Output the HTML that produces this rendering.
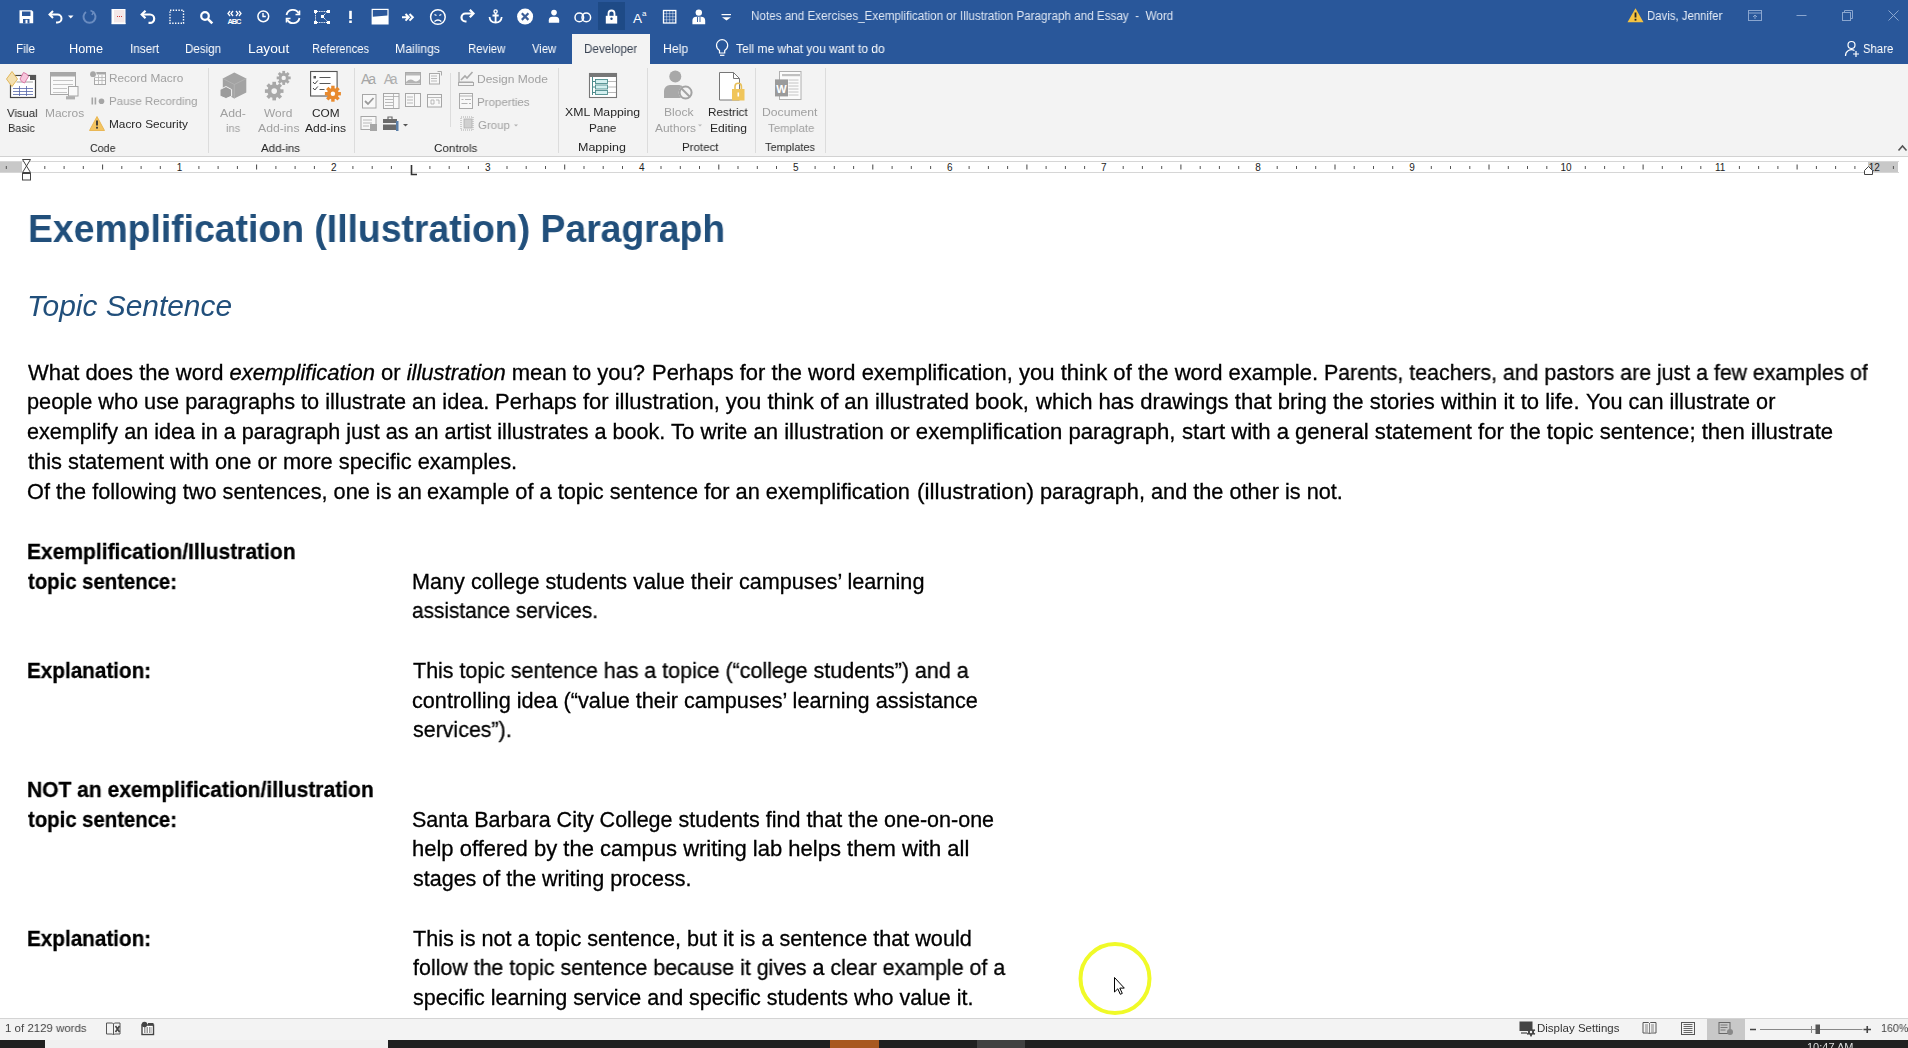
<!DOCTYPE html>
<html><head><meta charset="utf-8">
<style>
html,body{margin:0;padding:0}
body{width:1908px;height:1048px;overflow:hidden;position:relative;background:#fff;font-family:"Liberation Sans",sans-serif}
.a{position:absolute}
.t{position:absolute;white-space:nowrap;transform-origin:0 0;will-change:transform;font-family:"Liberation Sans",sans-serif}
svg{position:absolute;overflow:visible}
</style></head><body>
<!-- title + tabs -->
<div class="a" style="left:0;top:0;width:1908px;height:64px;background:#29579a"></div>
<div class="a" style="left:598px;top:2px;width:27px;height:28px;background:#1e4a86"></div>
<div class="a" style="left:572px;top:34px;width:78px;height:30px;background:#f3f3f3"></div>
<!-- ribbon -->
<div class="a" style="left:0;top:64px;width:1908px;height:92px;background:#f3f3f3"></div>
<div class="a" style="left:0;top:156px;width:1908px;height:1px;background:#d2d2d2"></div>
<!-- ribbon separators -->
<div class="a" style="left:208px;top:68px;width:1px;height:85px;background:#dcdcdc"></div>
<div class="a" style="left:354px;top:68px;width:1px;height:85px;background:#dcdcdc"></div>
<div class="a" style="left:450px;top:73px;width:1px;height:54px;background:#dcdcdc"></div>
<div class="a" style="left:558px;top:68px;width:1px;height:85px;background:#dcdcdc"></div>
<div class="a" style="left:647px;top:68px;width:1px;height:85px;background:#dcdcdc"></div>
<div class="a" style="left:755px;top:68px;width:1px;height:85px;background:#dcdcdc"></div>
<div class="a" style="left:825px;top:68px;width:1px;height:85px;background:#dcdcdc"></div>
<svg width="1908" height="1048" style="left:0;top:0">
<g fill="none" stroke="#fff" stroke-width="1.6">
 <!-- save -->
 <path d="M19.5 10.2h12.2l1.5 1.5v11.6h-13.7z" fill="#fff" stroke="none"/>
 <rect x="22" y="11.5" width="8.5" height="4.5" fill="#2b579a" stroke="none"/>
 <rect x="23" y="19" width="6.5" height="4.3" fill="#2b579a" stroke="none"/>
 <rect x="25.5" y="19.8" width="2" height="3.5" fill="#fff" stroke="none"/>
 <!-- undo -->
 <path d="M50 14.5h7.5a4 4 0 0 1 0 8h-1.5" stroke-width="2"/>
 <path d="M53 11l-3.5 3.5 3.5 3.5" stroke-width="2"/>
 <path d="M68 15.5h5.5l-2.75 3z" fill="#fff" stroke="none"/>
 <!-- redo disabled -->
 <path d="M93 12a6 6 0 1 1 -7 0" stroke="#6a8cc0" stroke-width="2"/>
 <path d="M90.5 10.5l3 1.5-1.5 3" stroke="#6a8cc0" stroke-width="1.6"/>
 <!-- book -->
 <path d="M111.5 9h14v15h-13a1.5 1.5 0 0 1-1-1.5z" fill="#fff" stroke="none"/>
 <rect x="114" y="10" width="10.5" height="12.5" fill="#f4e8e8" stroke="none"/>
 <path d="M117 16.5h5" stroke="#d04040" stroke-width="1" stroke-dasharray="1 1"/>
 <path d="M111.5 23.5h14" stroke="#fff" stroke-width="1.4"/>
 <!-- undo2 -->
 <path d="M142 14.5h8a4.2 4.2 0 0 1 0 8.4h-1.5" stroke-width="2.2"/>
 <path d="M145.5 10.8l-3.8 3.7 3.8 3.7" stroke-width="2.2"/>
 <!-- dotted rect -->
 <rect x="170" y="10.2" width="13.5" height="13" stroke-width="1.4" stroke-dasharray="1.4 1.4"/>
 <!-- search -->
 <circle cx="205" cy="16" r="3.8" stroke-width="2.2"/>
 <path d="M207.8 18.8l4.5 4.5" stroke-width="2.6"/>
 <!-- ABC -->
 <path d="M230 11l-2 2.5 2 2.5M233 11l-2 2.5 2 2.5M236 11l2 2.5-2 2.5M239 11l2 2.5-2 2.5" stroke-width="1.3"/>
 <text x="227.5" y="23.6" font-family="Liberation Sans" font-weight="bold" font-size="7.5" fill="#fff" stroke="none" textLength="14">ABC</text>
 <!-- clock -->
 <circle cx="263.3" cy="16.3" r="5.4" stroke-width="1.5"/>
 <path d="M263 13v3.5h2.8" stroke-width="1.4"/>
 <!-- sync -->
 <path d="M286.5 15a6.5 6.5 0 0 1 12.2-1.5M299.5 18a6.5 6.5 0 0 1-12.2 1.5" stroke-width="1.8"/>
 <path d="M299.5 10.5v4h-4M286.5 22.5v-4h4" stroke-width="1.6"/>
 <!-- shape select -->
 <g fill="#fff" stroke="none"><rect x="314" y="10" width="3" height="3"/><rect x="327" y="10" width="3" height="3"/><rect x="314" y="21" width="3" height="3"/><rect x="327" y="21" width="3" height="3"/><rect x="321" y="15" width="3" height="3"/></g>
 <path d="M317 11.5h10M317 22.5h10M315.5 13v8M322.5 16.5l5-5M322.5 16.5l5 5" stroke-width="1" stroke-dasharray="1.2 1"/>
 <!-- ! -->
 <rect x="349.2" y="10.8" width="2.6" height="8.2" fill="#fff" stroke="none"/>
 <rect x="349.2" y="20.5" width="2.6" height="2.5" fill="#fff" stroke="none"/>
 <!-- window -->
 <rect x="371.6" y="8.8" width="17" height="15.7" fill="#fff" stroke="none"/>
 <path d="M372.8 10h14.6v5.5l-14.6 1.3z" fill="#2b579a" stroke="none"/>
 <!-- arrows -->
 <path d="M402 17.3h6M405.5 14l3.3 3.3-3.3 3.3M409.5 14l3.3 3.3-3.3 3.3" stroke-width="2"/>
 <!-- sad face -->
 <circle cx="437.9" cy="17" r="7.3" stroke-width="1.5"/>
 <path d="M434.5 21.5q3.4-3 6.8 0M434.5 14.5l2 1M441.3 14.5l-2 1" stroke-width="1.3"/>
 <!-- redo -->
 <path d="M473 15.5h-7.5a4 4 0 0 0 0 8h1" stroke-width="2.2" transform="translate(0,-2)"/>
 <path d="M469.8 9.8l3.7 3.7-3.7 3.7" stroke-width="2.2"/>
 <!-- anchor -->
 <circle cx="495.6" cy="11.5" r="1.6" stroke-width="1.4"/>
 <path d="M495.6 13v9.5M492.5 15.5h6.2M489.5 17q0.5 5.5 6.1 5.5q5.6 0 6.1-5.5" stroke-width="1.8"/>
 <!-- x circle -->
 <circle cx="525.1" cy="16.6" r="8" fill="#fff" stroke="none"/>
 <path d="M521.8 13.3l6.6 6.6M528.4 13.3l-6.6 6.6" stroke="#3b5d96" stroke-width="2.2"/>
 <!-- person -->
 <circle cx="554" cy="12.6" r="2.8" fill="#fff" stroke="none"/>
 <path d="M548.8 22.8v-2.5a3.5 3.5 0 0 1 3.5-3.5h3.4a3.5 3.5 0 0 1 3.5 3.5v2.5z" fill="#fff" stroke="none"/>
 <!-- rings -->
 <circle cx="579.3" cy="17.4" r="4.3" stroke-width="1.5"/>
 <circle cx="586.3" cy="17.4" r="4.3" stroke-width="1.5"/>
 <!-- lock -->
 <path d="M608.5 16v-2.5a3 3 0 0 1 6 0v2.5" stroke-width="1.8"/>
 <rect x="605.8" y="15.8" width="11.4" height="7.8" fill="#fff" stroke="none"/>
 <circle cx="611.5" cy="18.8" r="1.2" fill="#1e4a86" stroke="none"/>
 <!-- Aa -->
 <text x="633" y="22.8" font-family="Liberation Sans" font-size="13.5" fill="#fff" stroke="none">A</text>
 <text x="642" y="15.5" font-family="Liberation Sans" font-size="8" fill="#fff" stroke="none">a</text>
 <!-- grid -->
 <rect x="663.5" y="10.5" width="12.3" height="12.5" stroke-width="1.3"/>
 <path d="M666.6 10.5v12.5M669.7 10.5v12.5M672.8 10.5v12.5M663.5 13.6h12.3M663.5 16.7h12.3M663.5 19.8h12.3" stroke-width="0.9" stroke-dasharray="1 1"/>
 <!-- person2 -->
 <circle cx="698.8" cy="12.6" r="3.2" fill="#fff" stroke="none"/>
 <path d="M692.4 24.3v-3.5a4 4 0 0 1 4-4h4.8a4 4 0 0 1 4 4v3.5z" fill="#fff" stroke="none"/>
 <path d="M697.5 17v5M700 17v5" stroke="#2b579a" stroke-width="0.9"/>
 <!-- dropdown -->
 <path d="M721.5 14.6h9.5" stroke-width="1.2"/>
 <path d="M722 17.2h9l-4.5 3.4z" fill="#fff" stroke="none"/>
 <!-- bulb -->
 <path d="M719.5 53v-2.5q-3-2-3-5.2a5.6 5.6 0 0 1 11.2 0q0 3.2-3 5.2v2.5z" stroke-width="1.2"/>
 <path d="M720 55.3h4.4" stroke-width="1.2"/>
 <!-- warning triangle title -->
 <path d="M1635.5 8.2l8 14h-16z" fill="#f5c342" stroke="none"/>
 <path d="M1635.5 12.5v5" stroke="#222" stroke-width="1.8"/>
 <rect x="1634.6" y="18.8" width="1.8" height="1.8" fill="#222" stroke="none"/>
 <!-- window controls -->
 <g stroke="#8aa6cf" stroke-width="1">
 <rect x="1748.5" y="10.5" width="13" height="10"/>
 <path d="M1748.5 13h13M1755 15v4M1753 17l2-2 2 2"/>
 <path d="M1796.5 15.5h10"/>
 <rect x="1842.5" y="12.5" width="8" height="8"/>
 <path d="M1844.5 12.5v-2h8v8h-2"/>
 <path d="M1888.5 10.5l10 10M1898.5 10.5l-10 10"/>
 </g>
 <!-- share icon -->
 <circle cx="1851.5" cy="45" r="3.5" stroke-width="1.2"/>
 <path d="M1845.5 56a6 6 0 0 1 9-5.5M1856 51v6M1853 54h6" stroke-width="1.2"/>
</g>
</svg>
<svg width="1908" height="1048" style="left:0;top:0">
<!-- Visual Basic -->
<rect x="10.5" y="75.5" width="25" height="22" fill="#fff" stroke="#444" stroke-width="1.2"/>
<rect x="30" y="75" width="6" height="5" fill="#555"/>
<path d="M13 88.5h20M13 91.5h20M13 94.5h20M19.5 86v10M26.5 86v10" stroke="#5566aa" stroke-width="0.8" fill="none"/>
<path d="M16.5 82h16.5" stroke="#888" stroke-width="0.8"/>
<path d="M12 71.5l5.5 7.5-5.5 7.5-5.5-7.5z" fill="#f3dfb0" stroke="#e2b75a" stroke-width="1"/>
<path d="M23.5 72.5q4 1 5 4l-4 6.5q-3.5-1-4.5-4z" fill="#f6c6dc" stroke="#d87aa6" stroke-width="1"/>
<!-- Macros disabled -->
<rect x="50.5" y="72.5" width="25" height="22" fill="#fafafa" stroke="#a6a6a6" stroke-width="1"/>
<rect x="50.5" y="72.5" width="25" height="4" fill="#a8a8a8"/>
<path d="M53 80.5h20M53 84.5h20M53 88.5h14M53 92.5h14" stroke="#b8b8b8" stroke-width="0.8"/>
<rect x="68.5" y="86.5" width="9.5" height="9.5" fill="#fafafa" stroke="#a6a6a6" stroke-width="1"/>
<rect x="66" y="96.2" width="9" height="3.2" fill="#b0b0b0"/>
<!-- record macro -->
<rect x="94.5" y="72.5" width="11" height="12" fill="#fafafa" stroke="#a8a8a8" stroke-width="1"/>
<rect x="94.5" y="72" width="11" height="2.5" fill="#a8a8a8"/>
<path d="M95 77.5h10M95 80.5h10M98.5 75v9M102 75v9" stroke="#b4b4b4" stroke-width="0.8"/>
<circle cx="93" cy="74.2" r="3.6" fill="#f3f3f3"/>
<circle cx="93" cy="74.2" r="2.9" fill="#a6a6a6"/>
<!-- pause -->
<rect x="91.5" y="97.5" width="1.6" height="7" fill="#a6a6a6"/><rect x="94.6" y="97.5" width="1.6" height="7" fill="#a6a6a6"/>
<circle cx="101.5" cy="101.3" r="2.8" fill="#a6a6a6"/>
<!-- macro security -->
<path d="M97 116.5l7.5 14h-15z" fill="#f3c462" stroke="#e6ad40" stroke-width="0.8"/>
<rect x="96.1" y="120.5" width="1.8" height="5" fill="#333"/><rect x="96.1" y="126.8" width="1.8" height="1.8" fill="#333"/>
<!-- Add-ins -->
<path d="M222.8 78.5l11.5-6 12 6v14l-12 6-11.5-6z" fill="#a3a3a3"/>
<path d="M222.8 78.5l11.5 6 12-6M234.3 84.5v14" stroke="#b8b8b8" stroke-width="0.7" fill="none"/>
<path d="M220 89.5l6-3 5.6 3v6.6l-5.6 2.5-6-2.5z" fill="#9b9b9b" stroke="#f3f3f3" stroke-width="1"/>
<!-- Word Add-ins gears -->
<g fill="#a8a8a8">
<circle cx="274.2" cy="91.1" r="6.8"/>
<g transform="translate(274.2,91.1)"><rect x="-1.8" y="-9.3" width="3.6" height="18.6"/><rect x="-1.8" y="-9.3" width="3.6" height="18.6" transform="rotate(45)"/><rect x="-1.8" y="-9.3" width="3.6" height="18.6" transform="rotate(90)"/><rect x="-1.8" y="-9.3" width="3.6" height="18.6" transform="rotate(135)"/></g>
<circle cx="283.7" cy="77.9" r="5"/>
<g transform="translate(283.7,77.9)"><rect x="-1.4" y="-7" width="2.8" height="14"/><rect x="-1.4" y="-7" width="2.8" height="14" transform="rotate(45)"/><rect x="-1.4" y="-7" width="2.8" height="14" transform="rotate(90)"/><rect x="-1.4" y="-7" width="2.8" height="14" transform="rotate(135)"/></g>
</g>
<circle cx="274.2" cy="91.1" r="2.8" fill="#f3f3f3"/><circle cx="283.7" cy="77.9" r="2.2" fill="#f3f3f3"/>
<!-- COM add-ins -->
<rect x="310.6" y="71.5" width="26.5" height="24.5" fill="#fff" stroke="#555" stroke-width="1.1"/>
<rect x="313.5" y="76" width="2.5" height="2.5" fill="#555"/>
<path d="M319.5 77.5h11M319.5 83.5h11M319.5 89.5h5" stroke="#444" stroke-width="0.9"/>
<path d="M313 82l1.8 2 3-3.5M313 88l1.8 2 3-3.5" stroke="#444" stroke-width="1" fill="none"/>
<g fill="#e88a2e"><circle cx="332.9" cy="93.7" r="5.8"/>
<g transform="translate(332.9,93.7)"><rect x="-1.7" y="-8" width="3.4" height="16"/><rect x="-1.7" y="-8" width="3.4" height="16" transform="rotate(45)"/><rect x="-1.7" y="-8" width="3.4" height="16" transform="rotate(90)"/><rect x="-1.7" y="-8" width="3.4" height="16" transform="rotate(135)"/></g></g>
<circle cx="332.9" cy="93.7" r="2.2" fill="#fff"/>
<!-- controls grid -->
<text x="361" y="84.3" font-family="Liberation Sans" font-size="14" fill="#a6a6a6" textLength="15">Aa</text>
<text x="383.8" y="84.3" font-family="Liberation Sans" font-size="14" fill="#b0b0b0" textLength="13.7">Aa</text>
<rect x="405.5" y="72.5" width="15" height="12" fill="#f8f8f8" stroke="#aaa" stroke-width="1"/>
<path d="M406 82q4-4 7.5-1.5t6.5-1.5v4.5h-14z" fill="#b4b4b4"/><rect x="406" y="73" width="14" height="2.5" fill="#b8b8b8"/>
<rect x="429.5" y="73.5" width="10" height="10.5" fill="#f8f8f8" stroke="#aaa" stroke-width="1"/>
<path d="M431 76h6M431 78.5h6M431 81h6" stroke="#aaa" stroke-width="0.8"/><path d="M437.5 71.5h4v4" stroke="#aaa" fill="none"/>
<rect x="362.5" y="94.5" width="13.5" height="13.5" fill="#f8f8f8" stroke="#a6a6a6" stroke-width="1"/>
<path d="M365 101l3 3 5.5-6" stroke="#9a9a9a" stroke-width="1.8" fill="none"/>
<rect x="383.5" y="93.5" width="15.5" height="15" fill="#f8f8f8" stroke="#a6a6a6" stroke-width="1"/>
<path d="M383.5 96.5h15.5M385 99.5h8M385 102.5h8M385 105.5h8M393.5 93.5v15" stroke="#aaa" stroke-width="0.8"/>
<rect x="405.5" y="93.5" width="15" height="13" fill="#f8f8f8" stroke="#a6a6a6" stroke-width="1"/>
<path d="M414.5 93.5v13M407 97h6M407 100h6M407 103h6" stroke="#aaa" stroke-width="0.8"/>
<rect x="427.5" y="94.5" width="14" height="12.5" fill="#f8f8f8" stroke="#a6a6a6" stroke-width="1"/>
<path d="M427.5 97.5h14M431 100h3v4h-3zM436 100h3v4" stroke="#aaa" stroke-width="0.8" fill="none"/>
<rect x="361" y="116.5" width="15" height="13" fill="#f8f8f8" stroke="#a6a6a6" stroke-width="1"/>
<path d="M363 120h9M363 123h9M363 126h6" stroke="#aaa" stroke-width="0.8"/><rect x="370" y="124" width="7" height="7" fill="#a6a6a6"/>
<rect x="383" y="119" width="14" height="11" fill="#6b6b6b"/><path d="M388 119v-2h4v2" stroke="#6b6b6b" fill="none" stroke-width="1.2"/>
<rect x="383" y="123" width="14" height="1.5" fill="#f3f3f3"/><rect x="396" y="121" width="2.5" height="10" fill="#5b7fa8"/>
<path d="M403 124h5l-2.5 2.5z" fill="#555"/>
<!-- design mode -->
<path d="M459 72v10h14" stroke="#aaa" stroke-width="1.2" fill="none"/>
<path d="M461 80l4-4 2 2 5.5-6" stroke="#aaa" stroke-width="1.6" fill="none"/>
<rect x="458.5" y="82.5" width="15" height="3" fill="none" stroke="#aaa" stroke-width="1"/>
<rect x="459.5" y="93.5" width="13" height="15" fill="#f8f8f8" stroke="#aaa" stroke-width="1"/>
<path d="M459.5 96h13M461.5 99.5h2M465 99.5h6M461.5 103.5h6M469 103.5h2" stroke="#aaa" stroke-width="0.9"/>
<rect x="461" y="117" width="12" height="13" fill="none" stroke="#aaa" stroke-width="1" stroke-dasharray="1 1"/>
<rect x="464" y="119" width="8" height="9" fill="#d0d0d0" stroke="#b0b0b0" stroke-width="0.8"/>
<path d="M514 124.5h4l-2 2z" fill="#b0b0b0"/>
<!-- XML mapping -->
<rect x="589.5" y="73.5" width="27" height="24" fill="#fff" stroke="#777" stroke-width="1.1"/>
<rect x="589.5" y="73.5" width="27" height="3.5" fill="#777"/>
<path d="M592.5 77v18M592.5 81.5h3M592.5 87h3M592.5 92.5h3" stroke="#4d8c8c" stroke-width="1" fill="none"/>
<rect x="595.5" y="79.5" width="12" height="4" fill="#d4f0f0" stroke="#4d8c8c" stroke-width="0.9"/>
<rect x="595.5" y="85" width="12" height="4" fill="#d4f0f0" stroke="#4d8c8c" stroke-width="0.9"/>
<rect x="595.5" y="90.5" width="12" height="4" fill="#d4f0f0" stroke="#4d8c8c" stroke-width="0.9"/>
<path d="M608 81.5h8M608 87h8M608 92.5h8" stroke="#999" stroke-width="0.7"/>
<!-- block authors -->
<circle cx="675.3" cy="76.5" r="6" fill="#a8a8a8"/>
<path d="M664 98v-7a6 6 0 0 1 6-6h9a6 6 0 0 1 5 2.5v10.5z" fill="#a8a8a8"/>
<circle cx="685.6" cy="92.6" r="7" fill="#f3f3f3"/>
<circle cx="685.6" cy="92.6" r="6" fill="none" stroke="#a3a3a3" stroke-width="2"/>
<path d="M681.5 88.5l8 8" stroke="#a3a3a3" stroke-width="2"/>
<path d="M698 124.5h4l-2 2z" fill="#b8b8b8"/>
<!-- restrict editing -->
<path d="M719.5 72.5h14l6 6v21.5h-20z" fill="#fff" stroke="#777" stroke-width="1"/>
<path d="M733.5 72.5v6h6" fill="none" stroke="#777" stroke-width="1"/>
<path d="M735 89v-2.5a3.2 3.2 0 0 1 6.4 0v2.5" stroke="#e8c05a" stroke-width="1.6" fill="none"/>
<rect x="732" y="89" width="12.5" height="11.5" fill="#f0c55a"/>
<rect x="737.5" y="92.5" width="1.6" height="4" fill="#fff"/>
<!-- document template -->
<rect x="779.5" y="71.5" width="21.5" height="28" fill="#fbfbfb" stroke="#b0b0b0" stroke-width="1"/>
<rect x="782" y="74" width="18" height="2.2" fill="#c0c0c0"/>
<path d="M788.5 80h10M788.5 83h10M788.5 86h10M788.5 89h10M788.5 92h10M788.5 95h10" stroke="#b8b8b8" stroke-width="0.8"/>
<rect x="775" y="79.4" width="13" height="17" fill="#9a9a9a"/>
<text x="776.3" y="92.5" font-family="Liberation Sans" font-weight="bold" font-size="11" fill="#fff">W</text>
<!-- collapse caret -->
<path d="M1898.5 150.5l4-4.5 4 4.5" stroke="#555" stroke-width="1.6" fill="none"/>
</svg>

<svg width="1908" height="1048" style="left:0;top:0">
<rect x="0" y="161" width="1899" height="12" fill="#fff"/>
<path d="M0 161.5H1899M0 172.5H1899" stroke="#d6d6d6" stroke-width="1"/>
<rect x="0" y="162" width="22" height="10" fill="#c8c8c8"/>
<rect x="1868" y="162" width="30" height="10" fill="#c8c8c8"/>
<rect x="5.8" y="166" width="1" height="3" fill="#555"/>
<rect x="44.3" y="166" width="1" height="3" fill="#555"/>
<rect x="63.6" y="166" width="1" height="3" fill="#555"/>
<rect x="82.8" y="166" width="1" height="3" fill="#555"/>
<rect x="102.1" y="164.5" width="1" height="5" fill="#444"/>
<rect x="121.3" y="166" width="1" height="3" fill="#555"/>
<rect x="140.6" y="166" width="1" height="3" fill="#555"/>
<rect x="159.8" y="166" width="1" height="3" fill="#555"/>
<text x="179.6" y="170.5" font-family="Liberation Sans" font-size="10" fill="#222" text-anchor="middle">1</text>
<rect x="198.4" y="166" width="1" height="3" fill="#555"/>
<rect x="217.6" y="166" width="1" height="3" fill="#555"/>
<rect x="236.9" y="166" width="1" height="3" fill="#555"/>
<rect x="256.1" y="164.5" width="1" height="5" fill="#444"/>
<rect x="275.4" y="166" width="1" height="3" fill="#555"/>
<rect x="294.6" y="166" width="1" height="3" fill="#555"/>
<rect x="313.9" y="166" width="1" height="3" fill="#555"/>
<text x="333.7" y="170.5" font-family="Liberation Sans" font-size="10" fill="#222" text-anchor="middle">2</text>
<rect x="352.4" y="166" width="1" height="3" fill="#555"/>
<rect x="371.7" y="166" width="1" height="3" fill="#555"/>
<rect x="390.9" y="166" width="1" height="3" fill="#555"/>
<rect x="429.4" y="166" width="1" height="3" fill="#555"/>
<rect x="448.7" y="166" width="1" height="3" fill="#555"/>
<rect x="467.9" y="166" width="1" height="3" fill="#555"/>
<text x="487.7" y="170.5" font-family="Liberation Sans" font-size="10" fill="#222" text-anchor="middle">3</text>
<rect x="506.5" y="166" width="1" height="3" fill="#555"/>
<rect x="525.7" y="166" width="1" height="3" fill="#555"/>
<rect x="545.0" y="166" width="1" height="3" fill="#555"/>
<rect x="564.2" y="164.5" width="1" height="5" fill="#444"/>
<rect x="583.5" y="166" width="1" height="3" fill="#555"/>
<rect x="602.7" y="166" width="1" height="3" fill="#555"/>
<rect x="622.0" y="166" width="1" height="3" fill="#555"/>
<text x="641.8" y="170.5" font-family="Liberation Sans" font-size="10" fill="#222" text-anchor="middle">4</text>
<rect x="660.5" y="166" width="1" height="3" fill="#555"/>
<rect x="679.8" y="166" width="1" height="3" fill="#555"/>
<rect x="699.0" y="166" width="1" height="3" fill="#555"/>
<rect x="718.3" y="164.5" width="1" height="5" fill="#444"/>
<rect x="737.5" y="166" width="1" height="3" fill="#555"/>
<rect x="756.8" y="166" width="1" height="3" fill="#555"/>
<rect x="776.0" y="166" width="1" height="3" fill="#555"/>
<text x="795.8" y="170.5" font-family="Liberation Sans" font-size="10" fill="#222" text-anchor="middle">5</text>
<rect x="814.6" y="166" width="1" height="3" fill="#555"/>
<rect x="833.8" y="166" width="1" height="3" fill="#555"/>
<rect x="853.1" y="166" width="1" height="3" fill="#555"/>
<rect x="872.3" y="164.5" width="1" height="5" fill="#444"/>
<rect x="891.6" y="166" width="1" height="3" fill="#555"/>
<rect x="910.8" y="166" width="1" height="3" fill="#555"/>
<rect x="930.1" y="166" width="1" height="3" fill="#555"/>
<text x="949.9" y="170.5" font-family="Liberation Sans" font-size="10" fill="#222" text-anchor="middle">6</text>
<rect x="968.6" y="166" width="1" height="3" fill="#555"/>
<rect x="987.9" y="166" width="1" height="3" fill="#555"/>
<rect x="1007.1" y="166" width="1" height="3" fill="#555"/>
<rect x="1026.4" y="164.5" width="1" height="5" fill="#444"/>
<rect x="1045.6" y="166" width="1" height="3" fill="#555"/>
<rect x="1064.9" y="166" width="1" height="3" fill="#555"/>
<rect x="1084.1" y="166" width="1" height="3" fill="#555"/>
<text x="1103.9" y="170.5" font-family="Liberation Sans" font-size="10" fill="#222" text-anchor="middle">7</text>
<rect x="1122.7" y="166" width="1" height="3" fill="#555"/>
<rect x="1141.9" y="166" width="1" height="3" fill="#555"/>
<rect x="1161.2" y="166" width="1" height="3" fill="#555"/>
<rect x="1180.4" y="164.5" width="1" height="5" fill="#444"/>
<rect x="1199.7" y="166" width="1" height="3" fill="#555"/>
<rect x="1218.9" y="166" width="1" height="3" fill="#555"/>
<rect x="1238.2" y="166" width="1" height="3" fill="#555"/>
<text x="1258.0" y="170.5" font-family="Liberation Sans" font-size="10" fill="#222" text-anchor="middle">8</text>
<rect x="1276.7" y="166" width="1" height="3" fill="#555"/>
<rect x="1296.0" y="166" width="1" height="3" fill="#555"/>
<rect x="1315.2" y="166" width="1" height="3" fill="#555"/>
<rect x="1334.5" y="164.5" width="1" height="5" fill="#444"/>
<rect x="1353.7" y="166" width="1" height="3" fill="#555"/>
<rect x="1373.0" y="166" width="1" height="3" fill="#555"/>
<rect x="1392.2" y="166" width="1" height="3" fill="#555"/>
<text x="1412.0" y="170.5" font-family="Liberation Sans" font-size="10" fill="#222" text-anchor="middle">9</text>
<rect x="1430.8" y="166" width="1" height="3" fill="#555"/>
<rect x="1450.0" y="166" width="1" height="3" fill="#555"/>
<rect x="1469.3" y="166" width="1" height="3" fill="#555"/>
<rect x="1488.5" y="164.5" width="1" height="5" fill="#444"/>
<rect x="1507.8" y="166" width="1" height="3" fill="#555"/>
<rect x="1527.0" y="166" width="1" height="3" fill="#555"/>
<rect x="1546.3" y="166" width="1" height="3" fill="#555"/>
<text x="1566.0" y="170.5" font-family="Liberation Sans" font-size="10" fill="#222" text-anchor="middle">10</text>
<rect x="1584.8" y="166" width="1" height="3" fill="#555"/>
<rect x="1604.1" y="166" width="1" height="3" fill="#555"/>
<rect x="1623.3" y="166" width="1" height="3" fill="#555"/>
<rect x="1642.6" y="164.5" width="1" height="5" fill="#444"/>
<rect x="1661.8" y="166" width="1" height="3" fill="#555"/>
<rect x="1681.1" y="166" width="1" height="3" fill="#555"/>
<rect x="1700.3" y="166" width="1" height="3" fill="#555"/>
<text x="1720.1" y="170.5" font-family="Liberation Sans" font-size="10" fill="#222" text-anchor="middle">11</text>
<rect x="1738.9" y="166" width="1" height="3" fill="#555"/>
<rect x="1758.1" y="166" width="1" height="3" fill="#555"/>
<rect x="1777.4" y="166" width="1" height="3" fill="#555"/>
<rect x="1796.6" y="164.5" width="1" height="5" fill="#444"/>
<rect x="1815.9" y="166" width="1" height="3" fill="#555"/>
<rect x="1835.1" y="166" width="1" height="3" fill="#555"/>
<rect x="1854.4" y="166" width="1" height="3" fill="#555"/>
<text x="1874.2" y="170.5" font-family="Liberation Sans" font-size="10" fill="#222" text-anchor="middle">12</text>
<rect x="1892.9" y="166" width="1" height="3" fill="#555"/>
<path d="M22.5 159.5h8l-4 6.5zM22.5 172.5h8l-4-6.5z" fill="#fff" stroke="#444" stroke-width="1"/>
<rect x="22.5" y="173.5" width="8" height="6.5" fill="#fff" stroke="#444" stroke-width="1"/>
<path d="M411.5 165v9.5h5.5" fill="none" stroke="#333" stroke-width="1.6"/>
<path d="M1864.5 174.5v-4l4-4 4 4v4z" fill="#fff" stroke="#444" stroke-width="1"/>
</svg>
<!-- status bar -->
<div class="a" style="left:0;top:1018px;width:1908px;height:1px;background:#d4d4d4"></div>
<div class="a" style="left:0;top:1019px;width:1908px;height:21px;background:#f3f3f3"></div>
<!-- taskbar -->
<div class="a" style="left:0;top:1040px;width:1908px;height:8px;background:#202020"></div>
<div class="a" style="left:45px;top:1040px;width:343px;height:8px;background:#f0f0f0"></div>
<div class="a" style="left:830px;top:1040px;width:49px;height:8px;background:#a8581f"></div>
<div class="a" style="left:977px;top:1040px;width:48px;height:8px;background:#414141"></div>
<div class="t" style="left:16.36px;top:43px;font-size:12.50px;line-height:12.50px;font-weight:normal;font-style:normal;color:#ffffff;transform:scaleX(0.9421);">File</div>
<div class="t" style="left:69.38px;top:43px;font-size:12.50px;line-height:12.50px;font-weight:normal;font-style:normal;color:#ffffff;transform:scaleX(1.0187);">Home</div>
<div class="t" style="left:129.57px;top:43px;font-size:12.50px;line-height:12.50px;font-weight:normal;font-style:normal;color:#ffffff;transform:scaleX(0.9333);">Insert</div>
<div class="t" style="left:185.27px;top:43px;font-size:12.50px;line-height:12.50px;font-weight:normal;font-style:normal;color:#ffffff;transform:scaleX(0.9263);">Design</div>
<div class="t" style="left:247.90px;top:43px;font-size:12.50px;line-height:12.50px;font-weight:normal;font-style:normal;color:#ffffff;transform:scaleX(1.1000);">Layout</div>
<div class="t" style="left:311.71px;top:43px;font-size:12.50px;line-height:12.50px;font-weight:normal;font-style:normal;color:#ffffff;transform:scaleX(0.8921);">References</div>
<div class="t" style="left:395.42px;top:43px;font-size:12.50px;line-height:12.50px;font-weight:normal;font-style:normal;color:#ffffff;transform:scaleX(0.9800);">Mailings</div>
<div class="t" style="left:467.69px;top:43px;font-size:12.50px;line-height:12.50px;font-weight:normal;font-style:normal;color:#ffffff;transform:scaleX(0.9100);">Review</div>
<div class="t" style="left:532.30px;top:43px;font-size:12.50px;line-height:12.50px;font-weight:normal;font-style:normal;color:#ffffff;transform:scaleX(0.9000);">View</div>
<div class="t" style="left:583.66px;top:43px;font-size:12.50px;line-height:12.50px;font-weight:normal;font-style:normal;color:#3a4454;transform:scaleX(0.9357);">Developer</div>
<div class="t" style="left:663.22px;top:43px;font-size:12.50px;line-height:12.50px;font-weight:normal;font-style:normal;color:#ffffff;transform:scaleX(0.9800);">Help</div>
<div class="t" style="left:735.50px;top:43px;font-size:12.50px;line-height:12.50px;font-weight:normal;font-style:normal;color:#ffffff;transform:scaleX(0.9643);">Tell me what you want to do</div>
<div class="t" style="left:1863.09px;top:43px;font-size:12.50px;line-height:12.50px;font-weight:normal;font-style:normal;color:#ffffff;transform:scaleX(0.9062);">Share</div>
<div class="t" style="left:751.37px;top:10px;font-size:12.50px;line-height:12.50px;font-weight:normal;font-style:normal;color:#dfe7f3;transform:scaleX(0.9340);">Notes and Exercises_Exemplification or Illustration Paragraph and Essay&nbsp; -&nbsp; Word</div>
<div class="t" style="left:1647.09px;top:10px;font-size:12.50px;line-height:12.50px;font-weight:normal;font-style:normal;color:#e8eef7;transform:scaleX(0.9110);">Davis, Jennifer</div>
<div class="t" style="left:6.60px;top:108px;font-size:11.80px;line-height:11.80px;font-weight:normal;font-style:normal;color:#262626;transform:scaleX(0.9581);">Visual</div>
<div class="t" style="left:7.67px;top:123px;font-size:11.80px;line-height:11.80px;font-weight:normal;font-style:normal;color:#262626;transform:scaleX(0.9321);">Basic</div>
<div class="t" style="left:44.69px;top:108px;font-size:11.80px;line-height:11.80px;font-weight:normal;font-style:normal;color:#a0a0a0;transform:scaleX(1.0132);">Macros</div>
<div class="t" style="left:108.50px;top:73px;font-size:11.80px;line-height:11.80px;font-weight:normal;font-style:normal;color:#a0a0a0;transform:scaleX(1.0027);">Record Macro</div>
<div class="t" style="left:108.52px;top:96px;font-size:11.80px;line-height:11.80px;font-weight:normal;font-style:normal;color:#a0a0a0;transform:scaleX(0.9775);">Pause Recording</div>
<div class="t" style="left:108.50px;top:119px;font-size:11.80px;line-height:11.80px;font-weight:normal;font-style:normal;color:#262626;transform:scaleX(1.0026);">Macro Security</div>
<div class="t" style="left:89.70px;top:143px;font-size:11.80px;line-height:11.80px;font-weight:normal;font-style:normal;color:#262626;transform:scaleX(0.9036);">Code</div>
<div class="t" style="left:220.00px;top:108px;font-size:11.80px;line-height:11.80px;font-weight:normal;font-style:normal;color:#a0a0a0;transform:scaleX(1.0400);">Add-</div>
<div class="t" style="left:225.76px;top:123px;font-size:11.80px;line-height:11.80px;font-weight:normal;font-style:normal;color:#a0a0a0;transform:scaleX(0.9429);">ins</div>
<div class="t" style="left:264.40px;top:108px;font-size:11.80px;line-height:11.80px;font-weight:normal;font-style:normal;color:#a0a0a0;transform:scaleX(1.0107);">Word</div>
<div class="t" style="left:257.50px;top:123px;font-size:11.80px;line-height:11.80px;font-weight:normal;font-style:normal;color:#a0a0a0;transform:scaleX(1.0375);">Add-ins</div>
<div class="t" style="left:311.60px;top:108px;font-size:11.80px;line-height:11.80px;font-weight:normal;font-style:normal;color:#262626;transform:scaleX(1.0000);">COM</div>
<div class="t" style="left:304.60px;top:123px;font-size:11.80px;line-height:11.80px;font-weight:normal;font-style:normal;color:#262626;transform:scaleX(1.0250);">Add-ins</div>
<div class="t" style="left:261.20px;top:143px;font-size:11.80px;line-height:11.80px;font-weight:normal;font-style:normal;color:#262626;transform:scaleX(0.9775);">Add-ins</div>
<div class="t" style="left:476.58px;top:74px;font-size:11.80px;line-height:11.80px;font-weight:normal;font-style:normal;color:#a0a0a0;transform:scaleX(1.0191);">Design Mode</div>
<div class="t" style="left:476.62px;top:97px;font-size:11.80px;line-height:11.80px;font-weight:normal;font-style:normal;color:#a0a0a0;transform:scaleX(0.9792);">Properties</div>
<div class="t" style="left:477.60px;top:120px;font-size:11.80px;line-height:11.80px;font-weight:normal;font-style:normal;color:#a0a0a0;transform:scaleX(0.9727);">Group</div>
<div class="t" style="left:434.20px;top:143px;font-size:11.80px;line-height:11.80px;font-weight:normal;font-style:normal;color:#262626;transform:scaleX(0.9864);">Controls</div>
<div class="t" style="left:565.00px;top:107px;font-size:11.80px;line-height:11.80px;font-weight:normal;font-style:normal;color:#262626;transform:scaleX(1.0389);">XML Mapping</div>
<div class="t" style="left:589.21px;top:123px;font-size:11.80px;line-height:11.80px;font-weight:normal;font-style:normal;color:#262626;transform:scaleX(0.9885);">Pane</div>
<div class="t" style="left:578.14px;top:142px;font-size:11.80px;line-height:11.80px;font-weight:normal;font-style:normal;color:#262626;transform:scaleX(1.0568);">Mapping</div>
<div class="t" style="left:664.38px;top:107px;font-size:11.80px;line-height:11.80px;font-weight:normal;font-style:normal;color:#a0a0a0;transform:scaleX(1.0250);">Block</div>
<div class="t" style="left:654.50px;top:123px;font-size:11.80px;line-height:11.80px;font-weight:normal;font-style:normal;color:#a0a0a0;transform:scaleX(1.0098);">Authors</div>
<div class="t" style="left:708.41px;top:107px;font-size:11.80px;line-height:11.80px;font-weight:normal;font-style:normal;color:#262626;transform:scaleX(0.9897);">Restrict</div>
<div class="t" style="left:709.57px;top:123px;font-size:11.80px;line-height:11.80px;font-weight:normal;font-style:normal;color:#262626;transform:scaleX(1.0257);">Editing</div>
<div class="t" style="left:682.42px;top:142px;font-size:11.80px;line-height:11.80px;font-weight:normal;font-style:normal;color:#262626;transform:scaleX(0.9778);">Protect</div>
<div class="t" style="left:761.67px;top:107px;font-size:11.80px;line-height:11.80px;font-weight:normal;font-style:normal;color:#a0a0a0;transform:scaleX(1.0321);">Document</div>
<div class="t" style="left:767.50px;top:123px;font-size:11.80px;line-height:11.80px;font-weight:normal;font-style:normal;color:#a0a0a0;transform:scaleX(0.9688);">Template</div>
<div class="t" style="left:765.20px;top:142px;font-size:11.80px;line-height:11.80px;font-weight:normal;font-style:normal;color:#262626;transform:scaleX(0.9315);">Templates</div>
<div class="t" style="left:4.80px;top:1023px;font-size:11.50px;line-height:11.50px;font-weight:normal;font-style:normal;color:#444444;transform:scaleX(0.9963);">1 of 2129 words</div>
<div class="t" style="left:1536.60px;top:1023px;font-size:11.50px;line-height:11.50px;font-weight:normal;font-style:normal;color:#333333;transform:scaleX(0.9988);">Display Settings</div>
<div class="t" style="left:1881.07px;top:1023px;font-size:11.50px;line-height:11.50px;font-weight:normal;font-style:normal;color:#444444;transform:scaleX(0.9286);">160%</div>
<div class="t" style="left:27.99px;top:209px;font-size:39.00px;line-height:39.00px;font-weight:bold;font-style:normal;color:#214f7b;transform:scaleX(0.9575);">Exemplification (Illustration) Paragraph</div>
<div class="t" style="left:27.48px;top:291px;font-size:29.70px;line-height:29.70px;font-weight:normal;font-style:italic;color:#214f7b;transform:scaleX(1.0075);">Topic Sentence</div>
<div class="t" style="left:27.60px;top:363px;font-size:21.50px;line-height:21.50px;font-weight:normal;font-style:normal;color:#000;transform:scaleX(1.0222);-webkit-text-stroke:0.3px #000;">What does the word <i>exemplification</i> or <i>illustration</i> mean to you?</div>
<div class="t" style="left:651.68px;top:363px;font-size:21.50px;line-height:21.50px;font-weight:normal;font-style:normal;color:#000;transform:scaleX(1.0199);-webkit-text-stroke:0.3px #000;">Perhaps for the word exemplification,</div>
<div class="t" style="left:1018.60px;top:363px;font-size:21.50px;line-height:21.50px;font-weight:normal;font-style:normal;color:#000;transform:scaleX(1.0255);-webkit-text-stroke:0.3px #000;">you think of the word example.</div>
<div class="t" style="left:1323.61px;top:363px;font-size:21.50px;line-height:21.50px;font-weight:normal;font-style:normal;color:#000;transform:scaleX(0.9916);-webkit-text-stroke:0.3px #000;">Parents, teachers, and pastors are just a few examples of</div>
<div class="t" style="left:26.59px;top:392px;font-size:21.50px;line-height:21.50px;font-weight:normal;font-style:normal;color:#000;transform:scaleX(1.0101);-webkit-text-stroke:0.3px #000;">people who use paragraphs to illustrate an idea.</div>
<div class="t" style="left:495.08px;top:392px;font-size:21.50px;line-height:21.50px;font-weight:normal;font-style:normal;color:#000;transform:scaleX(1.0221);-webkit-text-stroke:0.3px #000;">Perhaps for illustration, you think of an illustrated book,</div>
<div class="t" style="left:1035.90px;top:392px;font-size:21.50px;line-height:21.50px;font-weight:normal;font-style:normal;color:#000;transform:scaleX(1.0267);-webkit-text-stroke:0.3px #000;">which has drawings that bring the stories within it to life.</div>
<div class="t" style="left:1586.20px;top:392px;font-size:21.50px;line-height:21.50px;font-weight:normal;font-style:normal;color:#000;transform:scaleX(1.0069);-webkit-text-stroke:0.3px #000;">You can illustrate or</div>
<div class="t" style="left:26.60px;top:422px;font-size:21.50px;line-height:21.50px;font-weight:normal;font-style:normal;color:#000;transform:scaleX(1.0039);-webkit-text-stroke:0.3px #000;">exemplify an idea in a paragraph just as an artist illustrates a book.</div>
<div class="t" style="left:670.70px;top:422px;font-size:21.50px;line-height:21.50px;font-weight:normal;font-style:normal;color:#000;transform:scaleX(1.0297);-webkit-text-stroke:0.3px #000;">To write an illustration or exemplification paragraph,</div>
<div class="t" style="left:1181.80px;top:422px;font-size:21.50px;line-height:21.50px;font-weight:normal;font-style:normal;color:#000;transform:scaleX(1.0298);-webkit-text-stroke:0.3px #000;">start with a</div>
<div class="t" style="left:1295.37px;top:422px;font-size:21.50px;line-height:21.50px;font-weight:normal;font-style:normal;color:#000;transform:scaleX(1.0280);-webkit-text-stroke:0.3px #000;">general statement for the topic sentence; then illustrate</div>
<div class="t" style="left:27.60px;top:452px;font-size:21.50px;line-height:21.50px;font-weight:normal;font-style:normal;color:#000;transform:scaleX(1.0158);-webkit-text-stroke:0.3px #000;">this statement with one or more specific examples.</div>
<div class="t" style="left:26.59px;top:482px;font-size:21.50px;line-height:21.50px;font-weight:normal;font-style:normal;color:#000;transform:scaleX(1.0100);-webkit-text-stroke:0.3px #000;">Of the following two sentences, one is an</div>
<div class="t" style="left:426.99px;top:482px;font-size:21.50px;line-height:21.50px;font-weight:normal;font-style:normal;color:#000;transform:scaleX(1.0126);-webkit-text-stroke:0.3px #000;">example of a topic sentence for an exemplification</div>
<div class="t" style="left:916.65px;top:482px;font-size:21.50px;line-height:21.50px;font-weight:normal;font-style:normal;color:#000;transform:scaleX(1.0532);-webkit-text-stroke:0.3px #000;">(illustration)</div>
<div class="t" style="left:1040.19px;top:482px;font-size:21.50px;line-height:21.50px;font-weight:normal;font-style:normal;color:#000;transform:scaleX(1.0094);-webkit-text-stroke:0.3px #000;">paragraph, and the other is not.</div>
<div class="t" style="left:26.62px;top:542px;font-size:21.50px;line-height:21.50px;font-weight:bold;font-style:normal;color:#000;transform:scaleX(0.9773);-webkit-text-stroke:0.3px #000;">Exemplification/Illustration</div>
<div class="t" style="left:27.60px;top:572px;font-size:21.50px;line-height:21.50px;font-weight:bold;font-style:normal;color:#000;transform:scaleX(0.9449);-webkit-text-stroke:0.3px #000;">topic sentence:</div>
<div class="t" style="left:411.99px;top:572px;font-size:21.50px;line-height:21.50px;font-weight:normal;font-style:normal;color:#000;transform:scaleX(1.0057);-webkit-text-stroke:0.3px #000;">Many college students value their campuses’ learning</div>
<div class="t" style="left:412.03px;top:601px;font-size:21.50px;line-height:21.50px;font-weight:normal;font-style:normal;color:#000;transform:scaleX(0.9663);-webkit-text-stroke:0.3px #000;">assistance services.</div>
<div class="t" style="left:26.64px;top:661px;font-size:21.50px;line-height:21.50px;font-weight:bold;font-style:normal;color:#000;transform:scaleX(0.9627);-webkit-text-stroke:0.3px #000;">Explanation:</div>
<div class="t" style="left:413.00px;top:661px;font-size:21.50px;line-height:21.50px;font-weight:normal;font-style:normal;color:#000;transform:scaleX(0.9977);-webkit-text-stroke:0.3px #000;">This topic sentence has a topice (“college students”) and a</div>
<div class="t" style="left:411.99px;top:691px;font-size:21.50px;line-height:21.50px;font-weight:normal;font-style:normal;color:#000;transform:scaleX(1.0068);-webkit-text-stroke:0.3px #000;">controlling idea (“value their campuses’ learning assistance</div>
<div class="t" style="left:413.00px;top:720px;font-size:21.50px;line-height:21.50px;font-weight:normal;font-style:normal;color:#000;transform:scaleX(0.9949);-webkit-text-stroke:0.3px #000;">services”).</div>
<div class="t" style="left:26.62px;top:780px;font-size:21.50px;line-height:21.50px;font-weight:bold;font-style:normal;color:#000;transform:scaleX(0.9771);-webkit-text-stroke:0.3px #000;">NOT an exemplification/illustration</div>
<div class="t" style="left:27.60px;top:810px;font-size:21.50px;line-height:21.50px;font-weight:bold;font-style:normal;color:#000;transform:scaleX(0.9449);-webkit-text-stroke:0.3px #000;">topic sentence:</div>
<div class="t" style="left:412.00px;top:810px;font-size:21.50px;line-height:21.50px;font-weight:normal;font-style:normal;color:#000;transform:scaleX(1.0000);-webkit-text-stroke:0.3px #000;">Santa Barbara City College students find that the one-on-one</div>
<div class="t" style="left:411.98px;top:839px;font-size:21.50px;line-height:21.50px;font-weight:normal;font-style:normal;color:#000;transform:scaleX(1.0234);-webkit-text-stroke:0.3px #000;">help offered by the campus writing lab helps them with all</div>
<div class="t" style="left:413.00px;top:869px;font-size:21.50px;line-height:21.50px;font-weight:normal;font-style:normal;color:#000;transform:scaleX(1.0000);-webkit-text-stroke:0.3px #000;">stages of the writing process.</div>
<div class="t" style="left:26.64px;top:929px;font-size:21.50px;line-height:21.50px;font-weight:bold;font-style:normal;color:#000;transform:scaleX(0.9627);-webkit-text-stroke:0.3px #000;">Explanation:</div>
<div class="t" style="left:413.00px;top:929px;font-size:21.50px;line-height:21.50px;font-weight:normal;font-style:normal;color:#000;transform:scaleX(1.0054);-webkit-text-stroke:0.3px #000;">This is not a topic sentence, but it is a sentence that would</div>
<div class="t" style="left:413.00px;top:958px;font-size:21.50px;line-height:21.50px;font-weight:normal;font-style:normal;color:#000;transform:scaleX(0.9950);-webkit-text-stroke:0.3px #000;">follow the topic sentence because it gives a clear example of a</div>
<div class="t" style="left:413.00px;top:988px;font-size:21.50px;line-height:21.50px;font-weight:normal;font-style:normal;color:#000;transform:scaleX(1.0000);-webkit-text-stroke:0.3px #000;">specific learning service and specific students who value it.</div>
<svg width="1908" height="1048" style="left:0;top:0">
<!-- status icons -->
<path d="M106.5 1023v11h6l1 1 1-1h5.5v-11h-5.5l-1 1-1-1z" fill="none" stroke="#555" stroke-width="1"/>
<path d="M113.5 1024v10.5" stroke="#555" stroke-width="1"/>
<path d="M115.5 1026l4 6M119.5 1026l-4 6" stroke="#444" stroke-width="1.6"/>
<rect x="142" y="1025" width="11.5" height="9.5" fill="#fff" stroke="#444" stroke-width="1.4"/>
<path d="M144 1028h8M144 1030h8M144 1032h8" stroke="#333" stroke-width="1" stroke-dasharray="1.5 1"/>
<circle cx="144.5" cy="1024.5" r="2.8" fill="#444"/>
<rect x="148" y="1023" width="5.5" height="2.5" fill="#444"/>
<!-- display settings -->
<rect x="1519.5" y="1021.5" width="13" height="9.5" fill="#444"/>
<path d="M1521 1033h6" stroke="#444" stroke-width="1.2"/>
<g transform="translate(1531,1032)" fill="#444"><circle r="3"/><rect x="-0.9" y="-4.4" width="1.8" height="8.8"/><rect x="-0.9" y="-4.4" width="1.8" height="8.8" transform="rotate(60)"/><rect x="-0.9" y="-4.4" width="1.8" height="8.8" transform="rotate(120)"/></g>
<circle cx="1531" cy="1032" r="1.2" fill="#f3f3f3"/>
<!-- read mode -->
<path d="M1643 1022.5v10.5h5.5l1 1 1-1h5.5v-10.5h-5.5l-1 1-1-1z" fill="none" stroke="#555" stroke-width="1"/>
<path d="M1649.5 1023.5v10M1645 1025h3M1645 1027h3M1645 1029h3M1645 1031h3M1651 1025h3M1651 1027h3M1651 1029h3M1651 1031h3" stroke="#666" stroke-width="0.8"/>
<!-- print layout -->
<rect x="1681.5" y="1022.5" width="13" height="12" fill="none" stroke="#555" stroke-width="1"/>
<path d="M1683.5 1024.5h9M1683.5 1026.5h9M1683.5 1028.5h9M1683.5 1030.5h9M1683.5 1032.5h9" stroke="#555" stroke-width="0.9"/>
<!-- web layout -->
<rect x="1707" y="1019" width="38" height="21" fill="#c8c8c8"/>
<rect x="1719" y="1022.5" width="11" height="11" fill="none" stroke="#666" stroke-width="1"/>
<path d="M1720.5 1025h7M1720.5 1027.5h7M1720.5 1030h5" stroke="#666" stroke-width="0.8"/>
<circle cx="1730" cy="1032" r="3" fill="#888"/>
<!-- zoom slider -->
<path d="M1750 1029.5h6M1863.5 1029.5h7.5M1867.25 1026v7" stroke="#444" stroke-width="1.6"/>
<path d="M1760 1029.5h102.5" stroke="#888" stroke-width="1"/>
<path d="M1811.5 1026v7" stroke="#888" stroke-width="1"/>
<rect x="1815.5" y="1024.5" width="4.5" height="9.5" fill="#555"/>
<!-- taskbar clock hint -->
<text x="1807" y="1051" font-family="Liberation Sans" font-size="11" fill="#ddd">10:47 AM</text>
<!-- yellow circle -->
<circle cx="1115" cy="978.5" r="34.5" fill="none" stroke="#f0fa28" stroke-width="4"/>
<!-- cursor -->
<path d="M1114.5 977.5v14.5l3.3-3.2 2.5 5.5 2-0.9-2.5-5.3h4.5z" fill="#fff" stroke="#000" stroke-width="1"/>
</svg>

</body></html>
